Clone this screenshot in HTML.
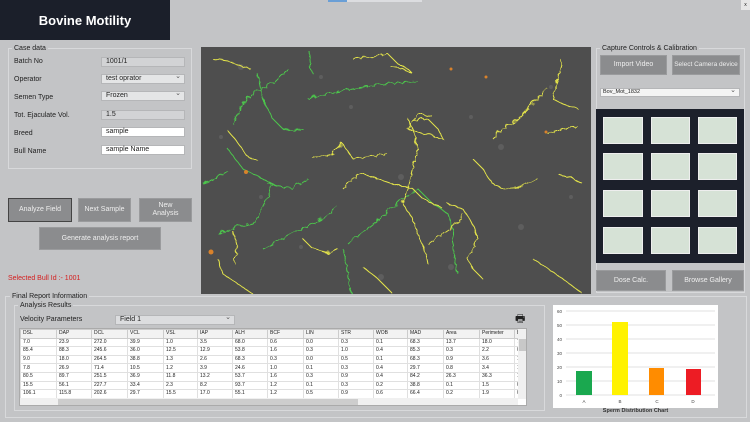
<!DOCTYPE html>
<html><head><meta charset="utf-8"><style>
*{box-sizing:border-box;margin:0;padding:0}
body{width:750px;height:422px;background:#c3c4c6;font-family:"Liberation Sans",sans-serif;font-size:7px;color:#222;position:relative;overflow:hidden}
.a{position:absolute}
.hdr{left:0;top:0;width:170px;height:40px;background:#1b1f2a;color:#fff;font-weight:bold;font-size:13px;display:flex;align-items:center;justify-content:center}
.gb{position:absolute;border:1px solid #d8d9db}
.gl{position:absolute;background:#c3c4c6;padding:0 2px;font-size:7px;color:#222;top:-5px;left:3px;line-height:9px;white-space:nowrap}
.lbl{position:absolute;left:14px;font-size:7px}
.inp{position:absolute;left:101px;width:84px;height:10px;border:1px solid #b5b6b8;background:#d2d3d5;font-size:7px;padding-left:4px;line-height:8px}
.inp.w{background:#fff}
.dd::after{content:"⌄";position:absolute;right:3px;top:-2px;font-size:7px;color:#555}
.btn{position:absolute;background:#8b8c8e;color:#eee;font-size:7px;display:flex;align-items:center;justify-content:center;text-align:center;border:1px solid #9a9b9d;line-height:8px;white-space:nowrap}
table{border-collapse:collapse;table-layout:fixed;background:#fff}
td{border:1px solid #e0e0e0;height:8.6px;font-size:5px;padding-left:2px;overflow:hidden;white-space:nowrap;line-height:7px}
tr.h td{background:#f2f2f2;border-color:#ccc}
.th{position:absolute;background:#d6e2d6;border:1px solid #eee}
</style></head><body>
<div class="a hdr">Bovine Motility</div>
<div class="a" style="left:328px;top:0;width:19px;height:2px;background:#6a9fd6"></div>
<div class="a" style="left:347px;top:0;width:75px;height:2px;background:#dcdde0"></div>
<div class="a" style="left:741px;top:0;width:9px;height:10px;background:#e6e6e6;font-size:5px;text-align:center;line-height:10px">x</div>

<div class="gb" style="left:8px;top:48px;width:184px;height:121px"><span class="gl">Case data</span></div>
<div class="lbl" style="top:58px">Batch No</div><div class="inp" style="top:57px">1001/1</div>
<div class="lbl" style="top:76px">Operator</div><div class="inp dd" style="top:74px;background:#e4e5e6">test oprator</div>
<div class="lbl" style="top:94px">Semen Type</div><div class="inp dd" style="top:91px;background:#e4e5e6">Frozen</div>
<div class="lbl" style="top:112px">Tot. Ejaculate Vol.</div><div class="inp" style="top:110px">1.5</div>
<div class="lbl" style="top:130px">Breed</div><div class="inp w" style="top:127px">sample</div>
<div class="lbl" style="top:148px">Bull Name</div><div class="inp w" style="top:145px">sample Name</div>

<div class="btn" style="left:8px;top:198px;width:64px;height:24px;border:1px solid #444">Analyze Field</div>
<div class="btn" style="left:78px;top:198px;width:53px;height:24px">Next Sample</div>
<div class="btn" style="left:139px;top:198px;width:53px;height:24px">New<br>Analysis</div>
<div class="btn" style="left:39px;top:227px;width:122px;height:23px">Generate analysis report</div>
<div class="a" style="left:8px;top:275px;color:#d42020;font-size:7px">Selected Bull Id :- 1001</div>

<svg class="a" style="left:201px;top:47px" width="390" height="247" viewBox="0 0 390 247">
<defs><filter id="wg" x="-5%" y="-5%" width="110%" height="110%"><feTurbulence type="turbulence" baseFrequency="0.12" numOctaves="1" seed="3"/><feDisplacementMap in="SourceGraphic" scale="5"/></filter></defs>
<rect width="390" height="247" fill="#4e4e4e"/>
<g fill="#5e5e5e"><circle cx="40" cy="20" r="3"/><circle cx="150" cy="60" r="2"/><circle cx="300" cy="100" r="3"/><circle cx="100" cy="200" r="2"/><circle cx="250" cy="220" r="3"/><circle cx="350" cy="40" r="2"/><circle cx="200" cy="130" r="3"/><circle cx="60" cy="150" r="2"/><circle cx="320" cy="180" r="3"/><circle cx="20" cy="90" r="2"/><circle cx="120" cy="30" r="2"/><circle cx="270" cy="70" r="2"/><circle cx="180" cy="230" r="3"/><circle cx="370" cy="150" r="2"/></g>
<g fill="none" stroke-width="1" filter="url(#wg)">
<polyline stroke="#4cc94c" points="30,75 40,55 50,45 60,40 70,35 80,25 85,20"/>
<polyline stroke="#4cc94c" points="55,25 58,40 62,55 70,70 80,80 90,82 100,80"/>
<polyline stroke="#4cc94c" points="105,50 130,44 160,38 190,35 215,33"/>
<polyline stroke="#4cc94c" points="25,100 40,120 60,130 75,138 90,140 105,130"/>
<polyline stroke="#4cc94c" points="0,135 15,128 25,122"/>
<polyline stroke="#4cc94c" points="15,185 30,180 50,175 60,160 65,150 70,135 65,135"/>
<polyline stroke="#4cc94c" points="60,200 80,190 100,180 110,175 120,170 135,158"/>
<polyline stroke="#4cc94c" points="140,200 145,220 147,240 150,247"/>
<polyline stroke="#4cc94c" points="145,195 170,175 190,160 200,150 215,140 230,155 245,165 250,180 250,200 255,225"/>
<polyline stroke="#4cc94c" points="106,2 108,20 110,25"/>
<polyline stroke="#e6e64a" points="10,10 25,12 40,18 48,20"/>
<polyline stroke="#e6e64a" points="25,82 32,90 38,98 45,108 55,112"/>
<polyline stroke="#e6e64a" points="110,110 130,105 140,95 150,110 170,108 185,105"/>
<polyline stroke="#e6e64a" points="205,70 212,85 215,100 210,120 205,140 200,155 210,170 215,185 222,200 225,215"/>
<polyline stroke="#e6e64a" points="210,72 225,70 235,80 240,90 220,85 205,80 215,65 230,68"/>
<polyline stroke="#e6e64a" points="140,140 150,130 160,125 175,130 190,135 210,140 220,150 240,160"/>
<polyline stroke="#e6e64a" points="270,110 280,120 290,135 300,140 320,138 335,130"/>
<polyline stroke="#e6e64a" points="290,90 300,80 310,75 325,60 335,50 345,40"/>
<polyline stroke="#e6e64a" points="360,12 355,30 350,50 360,55 375,60"/>
<polyline stroke="#e6e64a" points="345,85 360,80 375,78"/>
<polyline stroke="#e6e64a" points="355,125 370,130 380,135"/>
<polyline stroke="#e6e64a" points="245,155 260,160 270,175 275,190 265,210 270,220 280,230"/>
<polyline stroke="#e6e64a" points="225,195 240,185 255,175 260,165"/>
<polyline stroke="#e6e64a" points="330,210 345,220 360,230 380,245"/>
<polyline stroke="#e6e64a" points="15,210 20,225 35,235 50,245"/>
<polyline stroke="#e6e64a" points="100,190 110,200 125,205 135,200"/>
<polyline stroke="#e6e64a" points="160,218 175,230 190,245"/>
<polyline stroke="#e6e64a" points="150,10 170,8 185,5 195,15 205,20 210,25 200,20 188,18"/>
<polyline stroke="#e6e64a" points="30,182 35,200 32,215"/>
</g>
<g fill="#d9822b"><circle cx="45" cy="125" r="2"/><circle cx="10" cy="205" r="2.5"/><circle cx="250" cy="22" r="1.5"/><circle cx="285" cy="30" r="1.5"/><circle cx="345" cy="85" r="1.5"/></g>
</svg>

<div class="gb" style="left:596px;top:48px;width:149px;height:245px"><span class="gl">Capture Controls &amp; Calibration</span></div>
<div class="btn" style="left:600px;top:55px;width:67px;height:20px">Import Video</div>
<div class="btn" style="left:672px;top:55px;width:68px;height:20px;font-size:6.5px">Select Camera device</div>
<div class="inp dd" style="left:600px;top:88px;width:140px;height:9px;background:#f4f4f4;font-size:5.5px;padding-left:2px;line-height:7px">Bov_Mot_1832</div>
<div class="a" style="left:596px;top:109px;width:148px;height:154px;background:#1c202b"></div>
<div class="th" style="left:603px;top:117px;width:40px;height:27px"></div><div class="th" style="left:651px;top:117px;width:39px;height:27px"></div><div class="th" style="left:698px;top:117px;width:39px;height:27px"></div>
<div class="th" style="left:603px;top:153px;width:40px;height:27px"></div><div class="th" style="left:651px;top:153px;width:39px;height:27px"></div><div class="th" style="left:698px;top:153px;width:39px;height:27px"></div>
<div class="th" style="left:603px;top:190px;width:40px;height:27px"></div><div class="th" style="left:651px;top:190px;width:39px;height:27px"></div><div class="th" style="left:698px;top:190px;width:39px;height:27px"></div>
<div class="th" style="left:603px;top:227px;width:40px;height:27px"></div><div class="th" style="left:651px;top:227px;width:39px;height:27px"></div><div class="th" style="left:698px;top:227px;width:39px;height:27px"></div>
<div class="btn" style="left:596px;top:270px;width:70px;height:21px">Dose Calc.</div>
<div class="btn" style="left:672px;top:270px;width:72px;height:21px">Browse Gallery</div>

<div class="gb" style="left:5px;top:296px;width:742px;height:122px"><span class="gl" style="left:4px">Final Report Information</span></div>
<div class="gb" style="left:14px;top:305px;width:531px;height:106px"><span class="gl">Analysis Results</span></div>
<div class="a" style="left:20px;top:316px;font-size:7px">Velocity Parameters</div>
<div class="inp dd" style="left:115px;top:315px;width:120px;height:10px;background:#dcdddf;font-size:7px;line-height:8px">Field 1</div>
<div class="a" style="left:515px;top:314px;font-size:11px;line-height:11px">🖶</div>
<div class="a" style="left:19px;top:328px;width:508px;height:78px;background:#fff;border:1px solid #aaa;overflow:hidden">
<table style="width:498px">
<colgroup><col style="width:36px"><col style="width:35px"><col style="width:36px"><col style="width:36px"><col style="width:34px"><col style="width:35px"><col style="width:35px"><col style="width:36px"><col style="width:35px"><col style="width:35px"><col style="width:34px"><col style="width:36px"><col style="width:36px"><col style="width:35px"><col style="width:4px"></colgroup>
<tr class="h"><td>DSL</td><td>DAP</td><td>DCL</td><td>VCL</td><td>VSL</td><td>IAP</td><td>ALH</td><td>BCF</td><td>LIN</td><td>STR</td><td>WOB</td><td>MAD</td><td>Area</td><td>Perimeter</td><td>Bl</td></tr>
<tr><td>7.0</td><td>23.9</td><td>272.0</td><td>39.9</td><td>1.0</td><td>3.5</td><td>68.0</td><td>0.6</td><td>0.0</td><td>0.3</td><td>0.1</td><td>68.3</td><td>13.7</td><td>18.0</td><td>7</td></tr>
<tr><td>85.4</td><td>88.3</td><td>245.6</td><td>36.0</td><td>12.5</td><td>12.9</td><td>53.8</td><td>1.6</td><td>0.3</td><td>1.0</td><td>0.4</td><td>85.3</td><td>0.3</td><td>2.2</td><td>0</td></tr>
<tr><td>9.0</td><td>18.0</td><td>264.5</td><td>38.8</td><td>1.3</td><td>2.6</td><td>68.3</td><td>0.3</td><td>0.0</td><td>0.5</td><td>0.1</td><td>68.3</td><td>0.9</td><td>3.6</td><td>1</td></tr>
<tr><td>7.8</td><td>26.9</td><td>71.4</td><td>10.5</td><td>1.2</td><td>3.9</td><td>24.6</td><td>1.0</td><td>0.1</td><td>0.3</td><td>0.4</td><td>29.7</td><td>0.8</td><td>3.4</td><td>1</td></tr>
<tr><td>80.5</td><td>89.7</td><td>251.5</td><td>36.9</td><td>11.8</td><td>13.2</td><td>53.7</td><td>1.6</td><td>0.3</td><td>0.9</td><td>0.4</td><td>84.2</td><td>26.3</td><td>36.3</td><td>1</td></tr>
<tr><td>15.5</td><td>56.1</td><td>227.7</td><td>33.4</td><td>2.3</td><td>8.2</td><td>93.7</td><td>1.2</td><td>0.1</td><td>0.3</td><td>0.2</td><td>38.8</td><td>0.1</td><td>1.5</td><td>0</td></tr>
<tr><td>106.1</td><td>115.8</td><td>202.6</td><td>29.7</td><td>15.5</td><td>17.0</td><td>55.1</td><td>1.2</td><td>0.5</td><td>0.9</td><td>0.6</td><td>66.4</td><td>0.2</td><td>1.9</td><td>0</td></tr>
</table>
<div class="a" style="left:498px;top:0;width:9px;height:70px;background:#f0f0f0"><div style="margin:10px 1px;height:12px;background:#c8c8c8"></div></div>
<div class="a" style="left:0;top:69px;width:498px;height:8px;background:#f0f0f0"><div style="margin:1px 0 0 38px;width:300px;height:6px;background:#cdcdcd"></div></div>
</div>

<svg class="a" style="left:553px;top:305px" width="165" height="103" viewBox="0 0 165 103">
<rect width="165" height="103" fill="#fff"/>
<g stroke="#d9d9d9" stroke-width="0.7"><line x1="13" y1="6" x2="162" y2="6"/><line x1="13" y1="20" x2="162" y2="20"/><line x1="13" y1="34" x2="162" y2="34"/><line x1="13" y1="48" x2="162" y2="48"/><line x1="13" y1="62" x2="162" y2="62"/><line x1="13" y1="76" x2="162" y2="76"/><line x1="13" y1="90" x2="162" y2="90"/></g>
<g font-size="4.5" fill="#444" text-anchor="end"><text x="9" y="8">60</text><text x="9" y="22">50</text><text x="9" y="36">40</text><text x="9" y="50">30</text><text x="9" y="64">20</text><text x="9" y="78">10</text><text x="9" y="92">0</text></g>
<rect x="23" y="66" width="16" height="24" fill="#1aa84f"/>
<rect x="59" y="17" width="16" height="73" fill="#fff200"/>
<rect x="96" y="63" width="15" height="27" fill="#ff8c00"/>
<rect x="133" y="64" width="15" height="26" fill="#ed1c24"/>
<g font-size="4.5" fill="#444" text-anchor="middle"><text x="31" y="98">A</text><text x="67" y="98">B</text><text x="104" y="98">C</text><text x="140" y="98">D</text></g>
</svg>
<div class="a" style="left:553px;top:408px;width:165px;text-align:center;font-size:5.5px;font-weight:bold;color:#333">Sperm Distribution Chart</div>
</body></html>
